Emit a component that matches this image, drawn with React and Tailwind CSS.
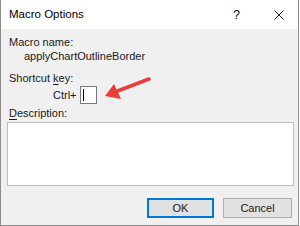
import React from "react";

const font = { fontFamily: '"Segoe UI", "Liberation Sans", Arial, sans-serif' };

const App = () => {
  return (
    <div
      className="relative w-[299px] h-[226px] bg-[#f0f0f0] border-x border-b border-[#8c8c8c] text-[11px] text-[#1a1a1a] overflow-hidden"
      style={font}
    >
      {/* Title bar */}
      <div className="h-[29px] bg-white flex items-center pl-[8px]">
        <span className="text-[11.5px] text-black">Macro Options</span>
        <span className="ml-auto mr-[34px] text-[12px] text-black">?</span>
        <svg width="10" height="10" viewBox="0 0 10 10" className="mr-[14px]">
          <path d="M0.5 0.5 L9.5 9.5 M9.5 0.5 L0.5 9.5" stroke="#222" strokeWidth="1" fill="none" />
        </svg>
      </div>

      {/* Body */}
      <div className="px-[6px] pt-[6px] leading-[14px]">
        <div className="pl-[2px] h-[14px]">Macro name:</div>
        <div className="pl-[17px] h-[14px]">applyChartOutlineBorder</div>

        <div className="pl-[2px] mt-[8px] h-[14px]">
          Shortcut <span className="underline underline-offset-2">k</span>ey:
        </div>
        <div className="flex items-center mt-[1px] h-[18px] pl-[46px]">
          <span className="mr-[3px]">Ctrl+</span>
          <div className="w-[17px] h-[18px] bg-white border border-[#7a7a7a] flex items-center pl-[2px]">
            <div className="w-px h-[12px] bg-black" />
          </div>
        </div>

        <div className="pl-[2px] mt-[2px] h-[14px]">
          <span className="underline underline-offset-2">D</span>escription:
        </div>
        <div className="mt-[2px] h-[64px] w-[287px] bg-white border border-[#bdbdbd]" />

        <div className="flex justify-end gap-[9px] mt-[12px]">
          <button className="w-[67px] h-[20px] bg-[#e1e1e1] border border-[#0078d7] outline outline-1 outline-[#0078d7] -outline-offset-2 flex items-center justify-center leading-none">
            OK
          </button>
          <button className="w-[69px] h-[20px] bg-[#e1e1e1] border border-[#adadad] flex items-center justify-center leading-none">
            Cancel
          </button>
        </div>
      </div>

      {/* Red annotation arrow */}
      <svg className="absolute left-[100px] top-[74px]" width="54" height="30" viewBox="0 0 54 30">
        <path d="M48 5 L14 18" stroke="#ee3b3b" strokeWidth="3.5" strokeLinecap="round" fill="none" />
        <path d="M4 22 L13 10 L20 25 Z" fill="#ee3b3b" />
      </svg>
    </div>
  );
};

export default App;
